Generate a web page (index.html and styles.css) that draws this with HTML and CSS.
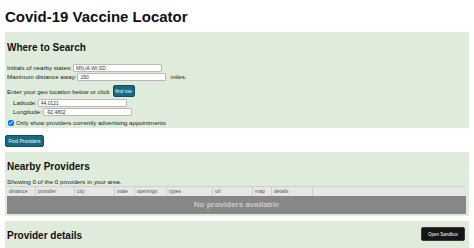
FILE: index.html
```html
<!DOCTYPE html>
<html lang="en">
<head>
    <meta charset="UTF-8">
    <meta name="viewport" content="width=device-width, initial-scale=1.0">
    <title>Covid-19 Vaccine Locator</title>
    <link rel="stylesheet" href="styles.css">
</head>
<body>

<h1 class="title">Covid-19 Vaccine Locator</h1>

<!-- Search form -->
<section class="panel search">
    <h2>Where to Search</h2>
    <div class="row">
        <label for="states">Initials of nearby states:</label>
        <input type="text" id="states" class="field" value="MN,IA,WI,SD">
    </div>
    <div class="row">
        <label for="distance">Maximum distance away:</label>
        <input type="text" id="distance" class="field" value="150">
        <span class="unit">miles.</span>
    </div>
    <div class="row geo">
        <span>Enter your geo location below or click</span>
        <button class="btn small">find me</button>
    </div>
    <div class="row indent">
        <label for="lat">Latitude:</label>
        <input type="text" id="lat" class="field" value="44.0121">
    </div>
    <div class="row indent">
        <label for="lon">Longitude:</label>
        <input type="text" id="lon" class="field" value="-92.4802">
    </div>
    <div class="row check">
        <input type="checkbox" id="open" checked>
        <label for="open">Only show providers currently advertising appointments</label>
    </div>
</section>

<button class="btn find">Find Providers</button>

<!-- Results -->
<section class="panel results">
    <h2>Nearby Providers</h2>
    <div class="summary">Showing 0 of the 0 providers in your area.</div>
    <div class="grid">
        <div class="grid-head">
            <div class="col c-distance">distance</div>
            <div class="col c-provider">provider</div>
            <div class="col c-city">city</div>
            <div class="col c-state">state</div>
            <div class="col c-openings">openings</div>
            <div class="col c-types">types</div>
            <div class="col c-url">url</div>
            <div class="col c-map">map</div>
            <div class="col c-details">details</div>
            <div class="col c-rest"></div>
        </div>
        <div class="grid-empty">No providers available</div>
    </div>
</section>

<section class="panel details">
    <h2>Provider details</h2>
</section>

<button class="sandbox">Open Sandbox</button>

</body>
</html>
```

FILE: styles.css
```css
body {
    margin: 0 5px;
    font-family: "Liberation Sans", Arial, sans-serif;
    font-size: 6.2px;
    color: #222;
    background: #fff;
    overflow: hidden;
}

.title {
    font-size: 15px;
    line-height: 17px;
    margin: 0 0 7px;
    padding-top: 8px;
    color: #111;
}

.panel {
    background-color: #dfecdb;
    padding: 10px 3px 1px 2px;
}

.panel h2 {
    font-size: 10px;
    line-height: 12px;
    margin: 0 0 9px;
    color: #111;
}

.row {
    display: flex;
    align-items: center;
    gap: 1px;
    height: 9px;
}

.row.geo {
    height: 12px;
    margin-top: 4px;
    gap: 3px;
}

.row.indent {
    padding-left: 6px;
}

.geo + .indent {
    margin-top: 1px;
}

.row.check {
    margin-top: 2px;
    font-size: 6.1px;
    gap: 2px;
}

.row.check input {
    width: 6px;
    height: 6px;
    margin: 0 0 0 1px;
}

.field {
    width: 89px;
    height: 8px;
    box-sizing: border-box;
    border: 1px solid #b9b9b9;
    border-radius: 1px;
    padding: 0 2px;
    font-family: inherit;
    font-size: 5px;
    color: #333;
    background: #fff;
}

.unit {
    margin-left: 3px;
}

.btn {
    background-color: #176a80;
    color: #fff;
    border: 1px solid #0f5062;
    border-radius: 2px;
    font-family: inherit;
    font-size: 5px;
    padding: 0;
    cursor: pointer;
}

.btn.small {
    width: 22px;
    height: 12px;
}

.btn.find {
    display: block;
    width: 39px;
    height: 12px;
    margin: 7px 0 5px;
}

.results {
    padding-top: 9px;
    padding-bottom: 2px;
}

.results h2 {
    margin-bottom: 5px;
}

.summary {
    height: 8px;
    line-height: 8px;
}

.grid-head {
    display: flex;
    height: 10px;
    background: #e6e6e6;
    border-top: 1px solid #cfcfcf;
    box-sizing: border-box;
}

.col {
    line-height: 9px;
    padding-left: 2px;
    color: #555;
    font-size: 5px;
    border-right: 1px solid #cdcdcd;
    box-sizing: border-box;
}

.c-distance { width: 29px; }
.c-provider { width: 39px; }
.c-city { width: 40px; }
.c-state { width: 20px; }
.c-openings { width: 32px; }
.c-types { width: 46px; }
.c-url { width: 40px; }
.c-map { width: 19px; }
.c-details { width: 41px; }
.c-rest { flex: 1; border-right: none; }

.grid-empty {
    height: 18px;
    line-height: 18px;
    background: #878787;
    color: #c9c9c9;
    text-align: center;
    font-size: 8px;
    font-weight: bold;
}

.details {
    margin-top: 5px;
    padding-top: 9px;
    height: 20px;
}

.sandbox {
    position: fixed;
    right: 9px;
    bottom: 7px;
    width: 44px;
    height: 14px;
    background: #151515;
    color: #fff;
    border: 1px solid #3a3a3a;
    border-radius: 2px;
    font-family: inherit;
    font-size: 4.5px;
    padding: 0;
}
```
